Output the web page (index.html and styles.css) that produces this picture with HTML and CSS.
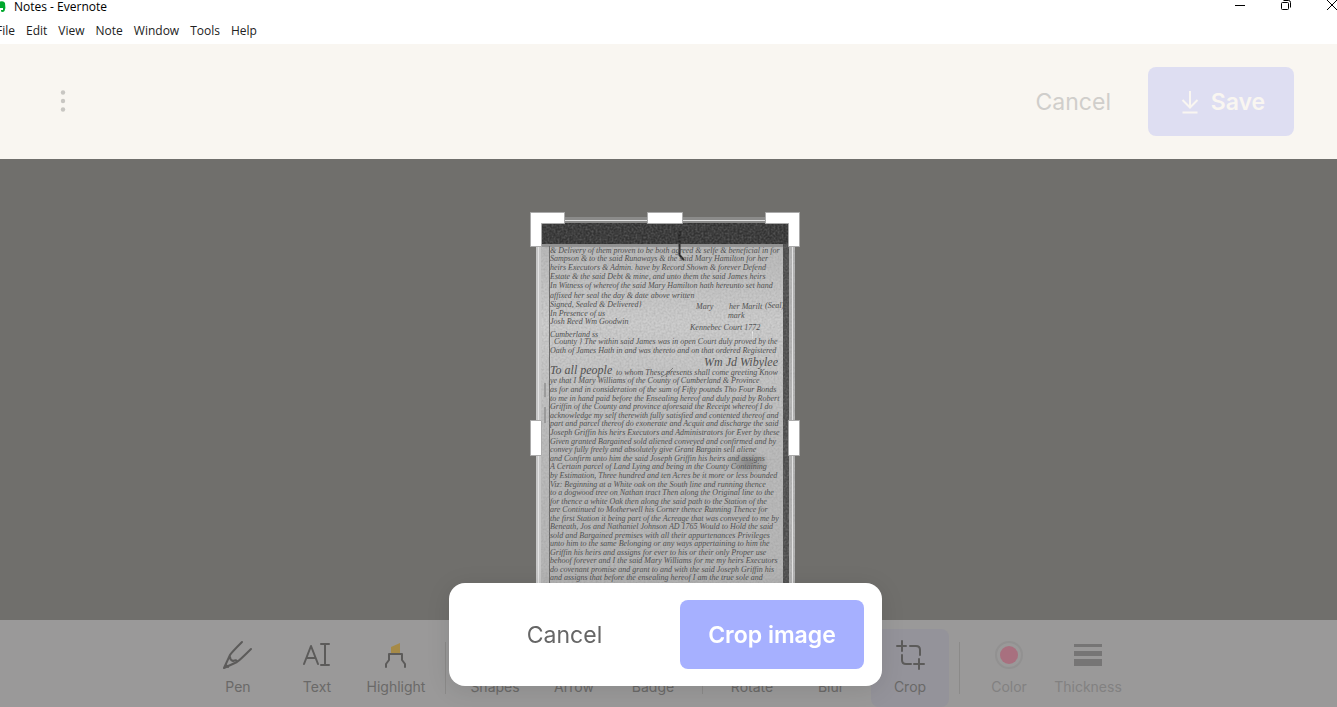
FILE: index.html
```html
<!DOCTYPE html>
<html lang="en">
<head>
  <meta charset="UTF-8">
  <meta name="viewport" content="width=device-width, initial-scale=1.0">
  <title>Notes - Evernote</title>
  <link rel="stylesheet" href="styles.css">
</head>
<body>
  <div class="title-bar">
    <svg class="app-icon" width="6" height="14" viewBox="0 0 6 14">
      <path d="M0 1.500Q4 0.500 5 3Q6 8 4.500 11Q3 12.500 1 11.500V10H3V8H0Z" fill="#00a82d"/>
    </svg>
    <span class="title">Notes - Evernote</span>
    <div class="window-buttons">
      <button aria-label="Minimize"><svg width="12" height="12" viewBox="0 0 12 12"><path d="M1 5.500H11"/></svg></button>
      <button aria-label="Restore"><svg width="12" height="12" viewBox="0 0 12 12"><rect x="1.500" y="2.500" width="7" height="7" rx="1"/><path d="M3.500 0.500H8.500Q10.500 0.500 10.500 2.500V7.500"/></svg></button>
      <button aria-label="Close"><svg width="12" height="12" viewBox="0 0 12 12"><path d="M1 0L11 10M11 0L1 10"/></svg></button>
    </div>
  </div>

  <nav class="menu-bar">
    <button>File</button>
    <button>Edit</button>
    <button>View</button>
    <button>Note</button>
    <button>Window</button>
    <button>Tools</button>
    <button>Help</button>
  </nav>

  <header class="header">
    <button class="more" aria-label="More">
      <svg width="6" height="24" viewBox="0 0 6 24"><circle cx="3" cy="2.500" r="2.200"/><circle cx="3" cy="11" r="2.200"/><circle cx="3" cy="19.500" r="2.200"/></svg>
    </button>
    <button class="header-cancel">Cancel</button>
    <button class="save">
      <svg width="18" height="24" viewBox="0 0 18 24"><path d="M9 1V17M1.500 10L9 17.500L16.500 10M1.500 22.500H16.500"/></svg>
      Save
    </button>
  </header>

  <main class="canvas">
    <!-- scanned page with the crop frame -->
    <svg class="crop-area" width="271" height="410" viewBox="0 0 271 410">
      <defs>
        <filter id="grain" x="0" y="0" width="100%" height="100%">
          <feTurbulence type="fractalNoise" baseFrequency="0.5" numOctaves="2" seed="4"/>
          <feColorMatrix type="matrix" values="0 0 0 0 0.3  0 0 0 0 0.3  0 0 0 0 0.3  0.9 0 0 0 -0.3"/>
        </filter>
        <linearGradient id="paper" x1="0" y1="0" x2="0" y2="1">
          <stop offset="0" stop-color="#b4b4b4"/>
          <stop offset="0.250" stop-color="#cecece"/>
          <stop offset="0.550" stop-color="#bcbcbc"/>
          <stop offset="1" stop-color="#b4b4b4"/>
        </linearGradient>
        <radialGradient id="stain"><stop offset="0" stop-color="#555" stop-opacity="0.500"/><stop offset="1" stop-color="#555" stop-opacity="0"/></radialGradient>
      </defs>
      <rect x="6" y="6" width="259" height="404" fill="#8b8b8a"/>
      <rect x="6" y="28" width="5" height="382" fill="#c6c6c6"/>
      <rect x="11" y="12" width="249" height="398" fill="url(#paper)"/>
      <rect x="11" y="12" width="249" height="21" fill="#333"/>
      <rect x="11" y="33" width="249" height="3" fill="#555" opacity="0.400"/>
      <rect x="253" y="33" width="6" height="377" fill="#4c4c4c"/>
      <rect x="259" y="33" width="6" height="377" fill="#b4b4b4"/>
      <ellipse cx="218" cy="252" rx="22" ry="12" fill="url(#stain)"/>
      <path d="M19.500 35V410" stroke="#666" stroke-width="1"/>
      <path d="M149.500 20V44L154 49" stroke="#222" stroke-width="2" fill="none"/>
      <path d="M222.500 120V128" stroke="#eee" stroke-width="1"/>
      <path d="M131 166Q138 163 143 157M15 172V186M15 196V212" stroke="#777" stroke-width="1" fill="none"/>
      <g class="ink">
        <text x="20" y="42">&amp; Delivery of them proven to be both agreed &amp; selfe &amp; beneficial in for</text>
        <text x="20" y="50">Sampson &amp; to the said Runaways &amp; the said Mary Hamilton for her</text>
        <text x="20" y="59">heirs Executors &amp; Admin. have by Record Shown &amp; forever Defend</text>
        <text x="20" y="68">Estate &amp; the said Debt &amp; mine, and unto them the said James heirs</text>
        <text x="20" y="77">In Witness of whereof the said Mary Hamilton hath hereunto set hand</text>
        <text x="20" y="87">affixed her seal the day &amp; date above written</text>
        <text x="20" y="96">Signed, Sealed &amp; Delivered}</text><text x="166" y="98">Mary</text><text x="199" y="98">her Marilt</text><text x="235" y="97">(Seal)</text>
        <text x="20" y="105">In Presence of us</text><text x="198" y="107">mark</text>
        <text x="20" y="113">Josh Reed Wm Goodwin</text><text x="160" y="119">Kennebec Court 1772</text>
        <text x="20" y="126">Cumberland ss</text>
        <text x="24" y="133">County } The within said James was in open Court duly proved by the</text>
        <text x="20" y="142">Oath of James Hath in and was thereto and on that ordered Registered</text>
        <text x="174" y="155" class="large">Wm Jd Wibylee</text>
        <text x="20" y="163" class="large">To all people</text><text x="86" y="164">to whom These presents shall come greeting Know</text>
        <text x="20" y="172">ye that I Mary Williams of the County of Cumberland &amp; Province</text>
        <text x="20" y="181">as for and in consideration of the sum of Fifty pounds Tho Four Bonds</text>
        <text x="20" y="190">to me in hand paid before the Ensealing hereof and duly paid by Robert</text>
        <text x="20" y="198">Griffin of the County and province aforesaid the Receipt whereof I do</text>
        <text x="20" y="207">acknowledge my self therewith fully satisfied and contented thereof and</text>
        <text x="20" y="215">part and parcel thereof do exonerate and Acquit and discharge the said</text>
        <text x="20" y="224">Joseph Griffin his heirs Executors and Administrators for Ever by these</text>
        <text x="20" y="233">Given granted Bargained sold aliened conveyed and confirmed and by</text>
        <text x="20" y="241">convey fully freely and absolutely give Grant Bargain sell aliene</text>
        <text x="20" y="250">and Confirm unto him the said Joseph Griffin his heirs and assigns</text>
        <text x="20" y="258">A Certain parcel of Land Lying and being in the County Containing</text>
        <text x="20" y="267">by Estimation, Three hundred and ten Acres be it more or less bounded</text>
        <text x="20" y="276">Viz: Beginning at a White oak on the South line and running thence</text>
        <text x="20" y="284">to a dogwood tree on Nathan tract Then along the Original line to the</text>
        <text x="20" y="293">for thence a white Oak then along the said path to the Station of the</text>
        <text x="20" y="301">are Continued to Motherwell his Corner thence Running Thence for</text>
        <text x="20" y="310">the first Station it being part of the Acreage that was conveyed to me by</text>
        <text x="20" y="318">Beneath, Jos and Nathaniel Johnson AD 1765 Would to Hold the said</text>
        <text x="20" y="327">sold and Bargained premises with all their appurtenances Privileges</text>
        <text x="20" y="335">unto him to the same Belonging or any ways appertaining to him the</text>
        <text x="20" y="344">Griffin his heirs and assigns for ever to his or their only Proper use</text>
        <text x="20" y="352">behoof forever and I the said Mary Williams for me my heirs Executors</text>
        <text x="20" y="361">do covenant promise and grant to and with the said Joseph Griffin his</text>
        <text x="20" y="369">and assigns that before the ensealing hereof I am the true sole and</text>
      </g>
      <rect x="11" y="12" width="254" height="398" filter="url(#grain)" opacity="0.800"/>
      <path d="M8.500 410V9.500H262.500V410" fill="none" stroke="#e2e2e2" stroke-width="1"/>
      <g class="handles">
        <path d="M0.500 1.500H34.500V12.500H11.500V35.500H0.500Z"/>
        <path d="M117.500 1.500H152.500V12.500H117.500Z"/>
        <path d="M235.500 1.500H269.500V35.500H258.500V12.500H235.500Z"/>
        <path d="M0.500 209.500H11.500V244.500H0.500Z"/>
        <path d="M258.500 209.500H269.500V244.500H258.500Z"/>
      </g>
    </svg>
  </main>

  <footer class="toolbar">
    <button class="tool"><svg viewBox="0 0 32 32"><path d="M2 29L8 16Q9 14 20 3M2 29L15 23Q18 21 29 10M8 18Q8 21 11 22Q15 20 15 23M4 26L6 28"/></svg>Pen</button>
    <button class="tool"><svg viewBox="0 0 32 32"><path d="M3 25L10 7L17 25M6 19H14M20 5H28M24 5V26M20 26H28"/></svg>Text</button>
    <button class="tool"><svg viewBox="0 0 32 32"><path d="M11 14V8L20 4V14Z" fill="#a68a47" stroke="none"/><path d="M6 28V25L9 21V15H22V21L25 25V28"/></svg>Highlight</button>
    <span class="line"></span>
    <button class="tool"><svg viewBox="0 0 32 32"><rect x="6" y="6" width="20" height="20"/></svg>Shapes</button>
    <button class="tool"><svg viewBox="0 0 32 32"><path d="M6 26L26 6M14 6H26V18"/></svg>Arrow</button>
    <button class="tool"><svg viewBox="0 0 32 32"><circle cx="16" cy="16" r="10"/></svg>Badge</button>
    <span class="line"></span>
    <button class="tool"><svg viewBox="0 0 32 32"><path d="M26 16A10 10 0 1 1 16 6H24"/></svg>Rotate</button>
    <button class="tool"><svg viewBox="0 0 32 32"><circle cx="16" cy="16" r="10"/></svg>Blur</button>
    <button class="tool selected"><svg viewBox="0 0 32 32"><path d="M3 7H12M8 2V12M16 7H22Q26 7 26 11V16M8 16V21Q8 25 12 25H17M20 25H30M25 20V30"/></svg>Crop</button>
    <span class="line"></span>
    <button class="tool faded"><svg viewBox="0 0 32 32"><circle cx="16" cy="16" r="13" stroke="#929191"/><circle cx="16" cy="16" r="9" fill="#a8707f" stroke="none"/></svg>Color</button>
    <button class="tool faded"><svg viewBox="0 0 32 32"><path d="M2 5H30V8H2ZM2 12H30V17H2ZM2 20H30V27H2Z" fill="#767575" stroke="none"/></svg>Thickness</button>
  </footer>

  <div class="dialog-holder">
    <div class="dialog">
      <button class="dialog-cancel">Cancel</button>
      <button class="crop-image">Crop image</button>
    </div>
  </div>
</body>
</html>
```

FILE: styles.css
```css
* {
  box-sizing: border-box;
}
body {
  margin: 0;
  height: 100vh;
  display: flex;
  flex-direction: column;
  overflow: hidden;
  background: white;
  font-family: Inter, "Liberation Sans", sans-serif;
}
button {
  border: 0;
  padding: 0;
  background: none;
  color: inherit;
  font: inherit;
}
svg {
  display: block;
}

/* window */
.title-bar {
  height: 18px;
  display: flex;
  align-items: flex-start;
  gap: 8px;
  font-family: "Open Sans", sans-serif;
  font-size: 12px;
  line-height: 14px;
  color: black;
}
.window-buttons {
  margin-left: auto;
  margin-right: -1px;
  display: flex;
  gap: 34px;
}
.window-buttons svg {
  fill: none;
  stroke: black;
  stroke-width: 1;
}
.menu-bar {
  height: 26px;
  margin-left: -4px;
  padding-bottom: 2px;
  display: flex;
  gap: 11px;
  align-items: center;
  font-family: "Open Sans", sans-serif;
  font-size: 12px;
  color: #222;
}

.header {
  height: 115px;
  padding: 0 43px 0 60px;
  display: flex;
  align-items: center;
  background: #f9f6f1;
  font-size: 23px;
}
.more {
  margin-right: auto;
}
.more svg {
  fill: #c8c6c2;
}
.header-cancel {
  margin-right: 37px;
  color: #d0cecb;
}
.save {
  width: 146px;
  height: 69px;
  padding-left: 4px;
  display: flex;
  align-items: center;
  justify-content: center;
  gap: 12px;
  border-radius: 8px;
  background: #dedef2;
  color: #f9f6f1;
  font-weight: 600;
}
.save svg {
  fill: none;
  stroke: #f9f6f1;
  stroke-width: 2;
}

.canvas {
  flex: 1;
  min-height: 0;
  padding: 52px 6px 0 0;
  display: flex;
  justify-content: center;
  align-items: flex-start;
  overflow: hidden;
  background: #706f6c;
}
.crop-area {
  flex: none;
}
.ink {
  fill: #484848;
  font-family: "Liberation Serif", serif;
  font-style: italic;
  font-size: 8px;
}
.ink .large {
  font-size: 12px;
}
.handles {
  fill: white;
  stroke: #aaa;
  stroke-width: 1;
}

/* tools */
.toolbar {
  height: 87px;
  padding: 9px 11px 0 0;
  display: flex;
  justify-content: center;
  gap: 1px;
  background: #9a9999;
  color: #6a6968;
  font-size: 14px;
}
.tool {
  width: 78px;
  height: 78px;
  padding-top: 10px;
  display: flex;
  flex-direction: column;
  align-items: center;
  gap: 6px;
  border-radius: 8px;
  line-height: 20px;
}
.tool svg {
  width: 32px;
  height: 32px;
  fill: none;
  stroke: #5c5b5a;
  stroke-width: 2;
  stroke-linecap: round;
  stroke-linejoin: round;
}
.selected {
  background: #94939a;
}
.faded {
  color: #828181;
}
.line {
  width: 1px;
  height: 52px;
  margin: 13px 9px 0;
  background: #8b8a89;
}

/* floats over the canvas and the tools */
.dialog-holder {
  position: fixed;
  left: 0;
  right: 6px;
  bottom: 21px;
  display: flex;
  justify-content: center;
}
.dialog {
  width: 433px;
  padding: 17px 18px;
  display: flex;
  justify-content: space-between;
  border-radius: 16px;
  background: white;
  box-shadow: 0 4px 24px rgba(0, 0, 0, 0.1);
  font-size: 23px;
}
.dialog-cancel {
  width: 195px;
  height: 69px;
  color: #666;
}
.crop-image {
  width: 184px;
  height: 69px;
  border-radius: 8px;
  background: #a6b0ff;
  color: white;
  font-weight: 600;
}
```
